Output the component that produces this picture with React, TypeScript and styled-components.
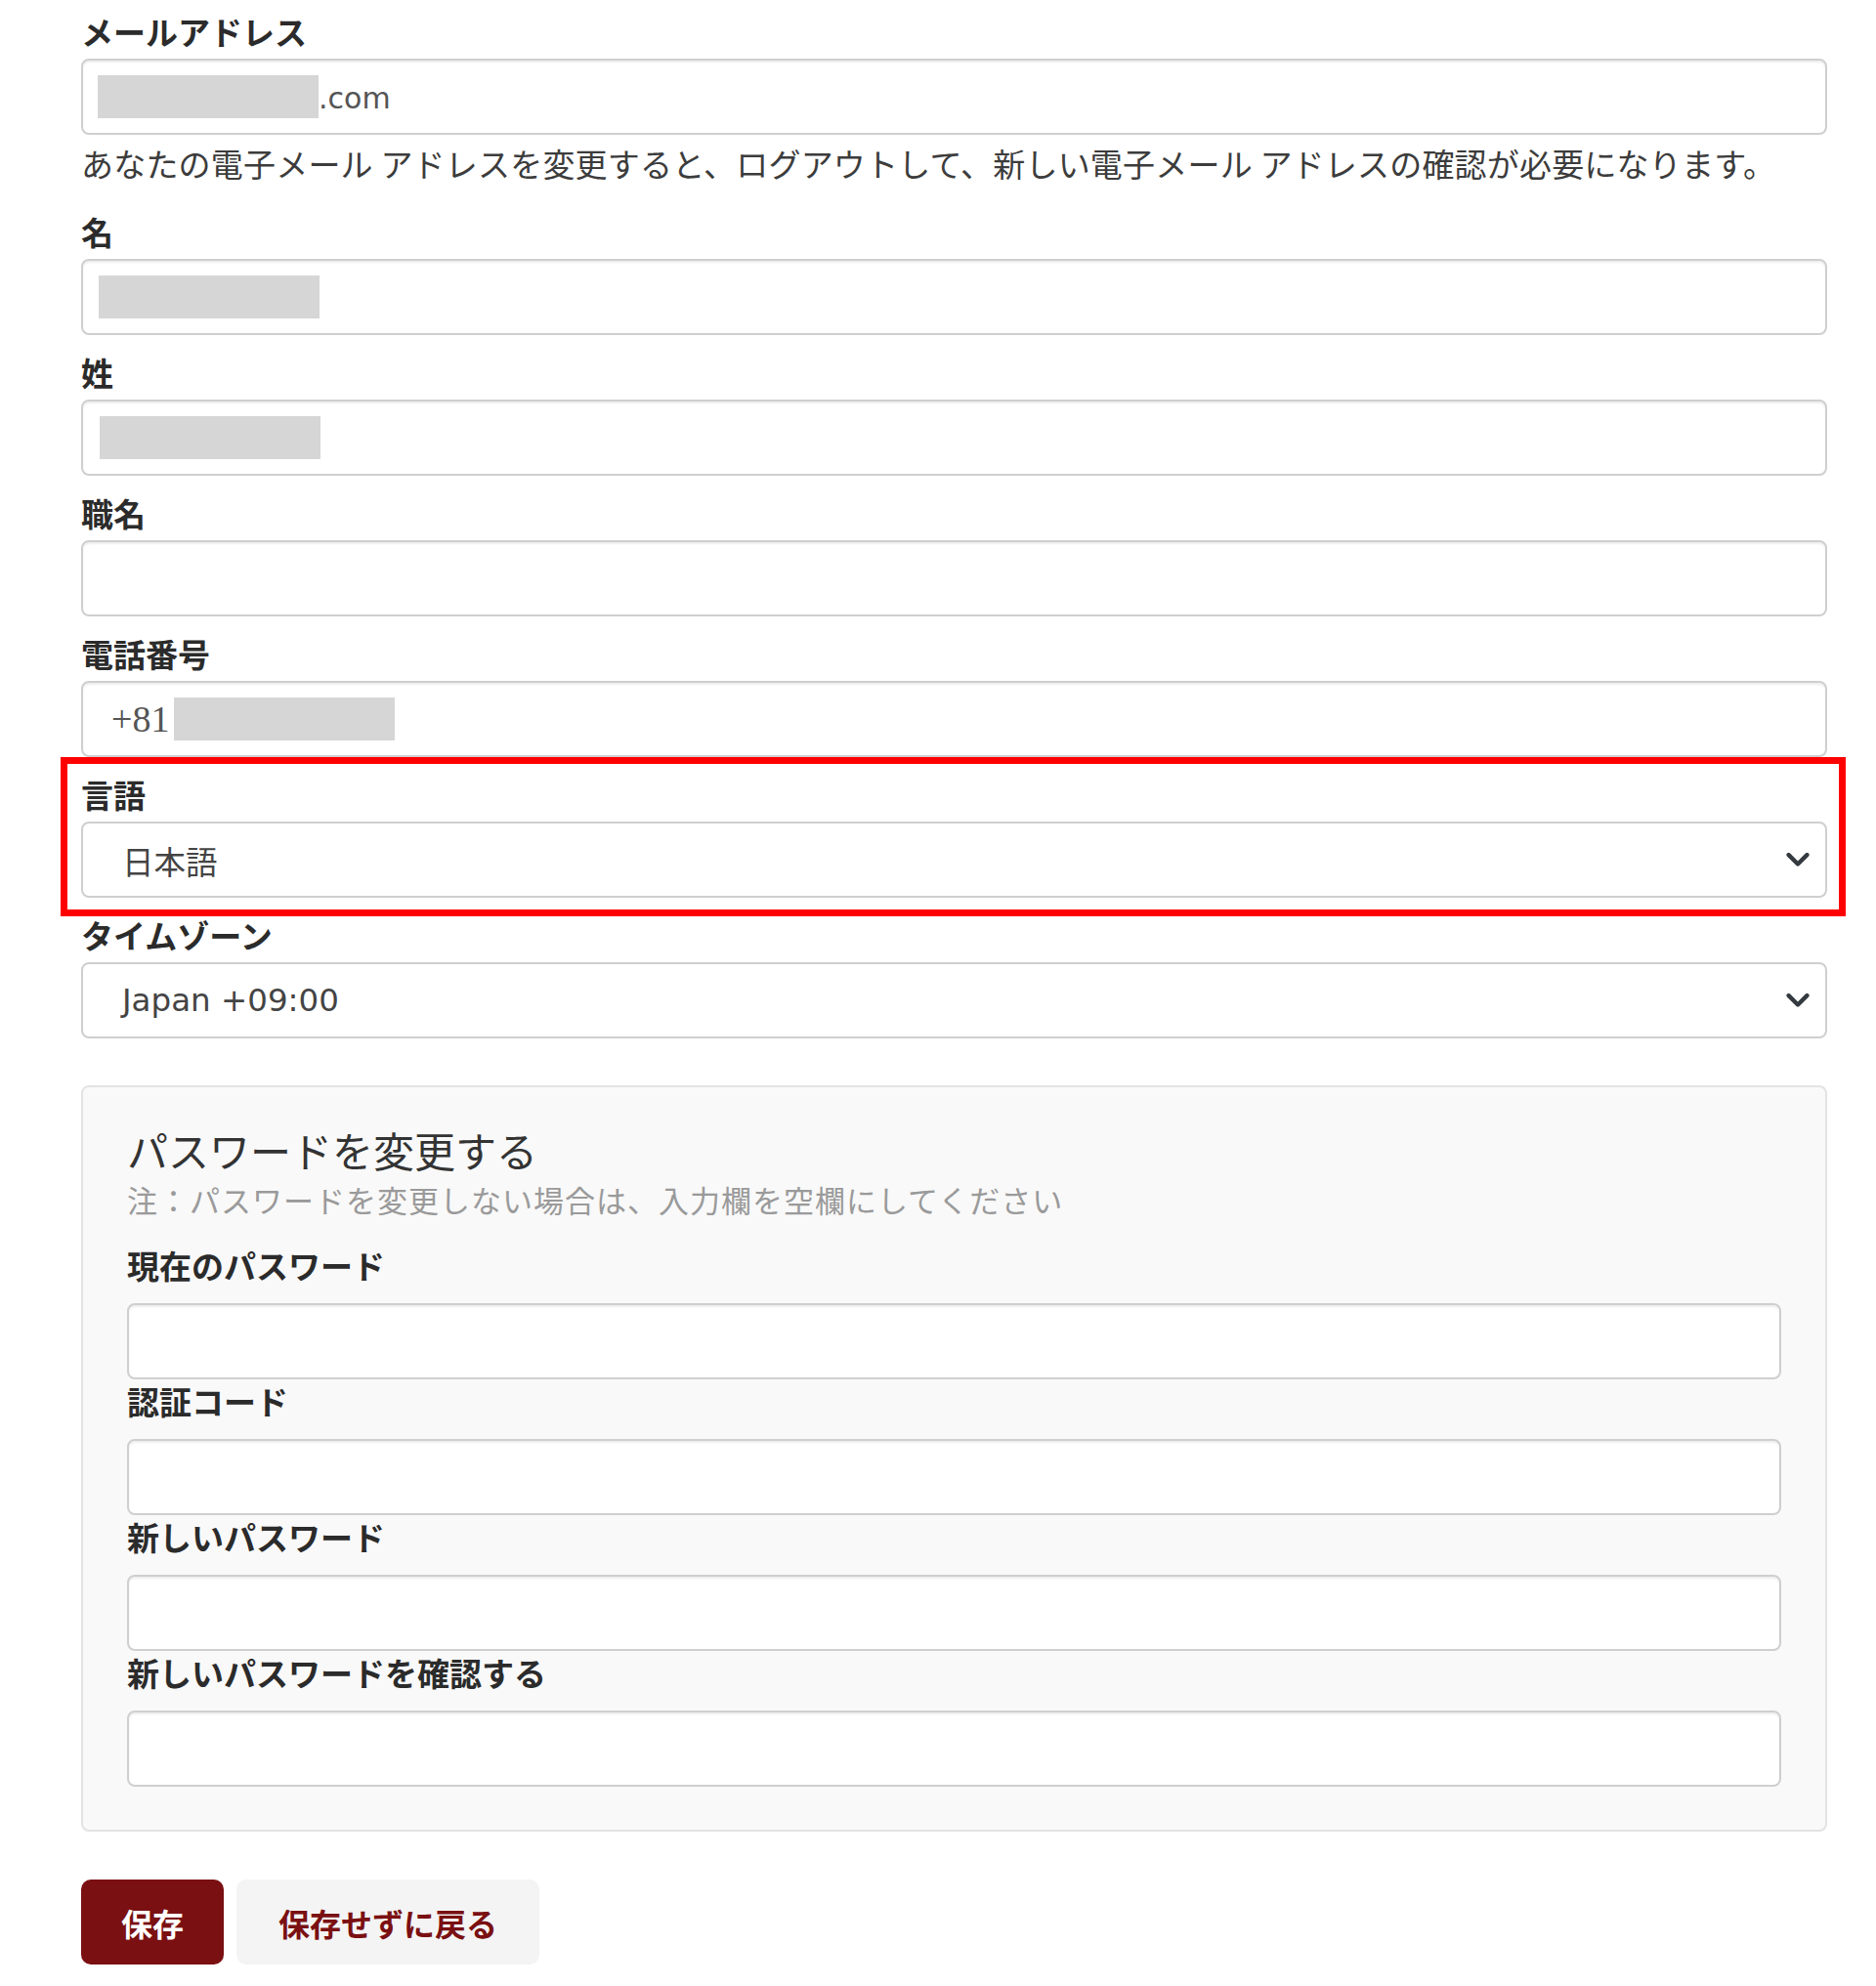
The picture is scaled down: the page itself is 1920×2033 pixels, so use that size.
import styled, { createGlobalStyle, css } from "styled-components";

const GlobalStyle = createGlobalStyle`
  html, body {
    margin: 0;
    padding: 0;
    background: #ffffff;
  }
  body {
    font-family: "Noto Sans CJK JP", "Noto Sans", sans-serif;
    color: #333333;
  }
  * {
    box-sizing: border-box;
  }
`;

const Chevron = () => (
  <svg width="24" height="15" viewBox="0 0 24 15" fill="none">
    <path
      d="M2.6 2.6 L12 12 L21.4 2.6"
      stroke="#343a40"
      strokeWidth="4.4"
      strokeLinecap="round"
      strokeLinejoin="round"
    />
  </svg>
);

const App = () => {
  return (
    <>
      <GlobalStyle />
      <Page>
        <Field>
          <Label>メールアドレス</Label>
          <ValueBox $pad={15}>
            <Redacted />
            <EmailText>.com</EmailText>
          </ValueBox>
          <Help>
            あなたの電子メール アドレスを変更すると、ログアウトして、新しい電子メール アドレスの確認が必要になります。
          </Help>
        </Field>

        <Field $top={28}>
          <Label>名</Label>
          <ValueBox $pad={16}>
            <Redacted />
          </ValueBox>
        </Field>

        <Field $top={18}>
          <Label>姓</Label>
          <ValueBox $pad={17}>
            <Redacted />
          </ValueBox>
        </Field>

        <Field $top={18}>
          <Label>職名</Label>
          <TextInput type="text" />
        </Field>

        <Field $top={18}>
          <Label>電話番号</Label>
          <ValueBox $pad={29}>
            <PhonePrefix>+81</PhonePrefix>
            <Redacted />
          </ValueBox>
        </Field>

        <Field $top={18} $highlight>
          <Label>言語</Label>
          <SelectBox>
            <SelectText>日本語</SelectText>
            <ChevronSlot>
              <Chevron />
            </ChevronSlot>
          </SelectBox>
        </Field>

        <Field $top={18}>
          <Label>タイムゾーン</Label>
          <SelectBox>
            <SelectText>Japan +09:00</SelectText>
            <ChevronSlot>
              <Chevron />
            </ChevronSlot>
          </SelectBox>
        </Field>

        <Well>
          <WellTitle>パスワードを変更する</WellTitle>
          <WellNote>注：パスワードを変更しない場合は、入力欄を空欄にしてください</WellNote>

          <Field $top={27}>
            <Label $gap={19}>現在のパスワード</Label>
            <TextInput type="password" />
          </Field>
          <Field $top={2}>
            <Label $gap={19}>認証コード</Label>
            <TextInput type="text" />
          </Field>
          <Field $top={2}>
            <Label $gap={19}>新しいパスワード</Label>
            <TextInput type="password" />
          </Field>
          <Field $top={2}>
            <Label $gap={19}>新しいパスワードを確認する</Label>
            <TextInput type="password" />
          </Field>
        </Well>

        <ButtonRow>
          <PrimaryButton>保存</PrimaryButton>
          <SecondaryButton>保存せずに戻る</SecondaryButton>
        </ButtonRow>
      </Page>
    </>
  );
};

export default App;

const Page = styled.div`
  padding: 12px 50px 20px 83px;
  width: 1920px;
`;

const Field = styled.div<{ $top?: number; $highlight?: boolean }>`
  position: relative;
  display: flex;
  flex-direction: column;
  margin-top: ${(p) => p.$top ?? 0}px;

  ${(p) =>
    p.$highlight &&
    css`
      &::after {
        content: "";
        position: absolute;
        top: -18px;
        bottom: -19px;
        left: -21px;
        right: -19px;
        border: 7px solid #ff0000;
        pointer-events: none;
      }
    `}
`;

const Label = styled.label<{ $gap?: number }>`
  display: block;
  font-size: 33px;
  font-weight: 700;
  line-height: 40px;
  color: #2b2b2b;
  margin-bottom: ${(p) => p.$gap ?? 8}px;
`;

const boxBase = css`
  width: 100%;
  height: 78px;
  background: #ffffff;
  border: 2px solid #cfcfcf;
  border-radius: 8px;
  box-shadow: inset 0 2px 2px rgba(0, 0, 0, 0.07);
`;

const TextInput = styled.input`
  ${boxBase};
  display: block;
  padding: 0 24px;
  font-size: 30px;
  font-family: "DejaVu Sans", "Noto Sans CJK JP", sans-serif;
  color: #555555;
  outline: none;
`;

const ValueBox = styled.div<{ $pad: number }>`
  ${boxBase};
  display: flex;
  align-items: center;
  padding-left: ${(p) => p.$pad}px;
`;

const Redacted = styled.span`
  display: block;
  width: 226px;
  height: 44px;
  background: #d6d6d6;
  flex-shrink: 0;
`;

const EmailText = styled.span`
  font-family: "DejaVu Sans", "Noto Sans CJK JP", sans-serif;
  font-size: 30px;
  color: #555555;
  margin-top: 2px;
`;

const PhonePrefix = styled.span`
  width: 64px;
  font-family: "Liberation Serif", "DejaVu Serif", serif;
  font-size: 38px;
  line-height: 44px;
  color: #555555;
  flex-shrink: 0;
`;

const SelectBox = styled.div`
  ${boxBase};
  position: relative;
  display: flex;
  align-items: center;
  padding: 0 70px 0 40px;
  box-shadow: none;
`;

const SelectText = styled.span`
  font-family: "DejaVu Sans", "Noto Sans CJK JP", sans-serif;
  font-size: 32.5px;
  color: #444444;
`;

const ChevronSlot = styled.span`
  position: absolute;
  right: 16px;
  top: 50%;
  transform: translateY(-50%);
  display: flex;
`;

const Help = styled.div`
  font-size: 33px;
  letter-spacing: 0.2px;
  line-height: 44px;
  margin-top: 7px;
  color: #3c3c3c;
  white-space: nowrap;
`;

const Well = styled.div`
  margin-top: 48px;
  padding: 38px 45px 44px 45px;
  background: #f9f9f9;
  border: 2px solid #e3e3e3;
  border-radius: 8px;
`;

const WellTitle = styled.div`
  font-size: 42px;
  line-height: 52px;
  font-weight: 400;
  color: #333333;
`;

const WellNote = styled.div`
  font-size: 31px;
  letter-spacing: 1px;
  line-height: 40px;
  margin-top: 5px;
  color: #9a9a9a;
  white-space: nowrap;
`;

const ButtonRow = styled.div`
  display: flex;
  gap: 13px;
  margin-top: 49px;
`;

const buttonBase = css`
  height: 87px;
  border: none;
  border-radius: 10px;
  font-family: "Noto Sans CJK JP", sans-serif;
  font-size: 32px;
  font-weight: 700;
  padding: 0 40px;
  cursor: pointer;
`;

const PrimaryButton = styled.button`
  ${buttonBase};
  width: 146px;
  background: #7a1012;
  color: #ffffff;
`;

const SecondaryButton = styled.button`
  ${buttonBase};
  width: 310px;
  background: #f4f4f4;
  color: #7a1012;
`;
